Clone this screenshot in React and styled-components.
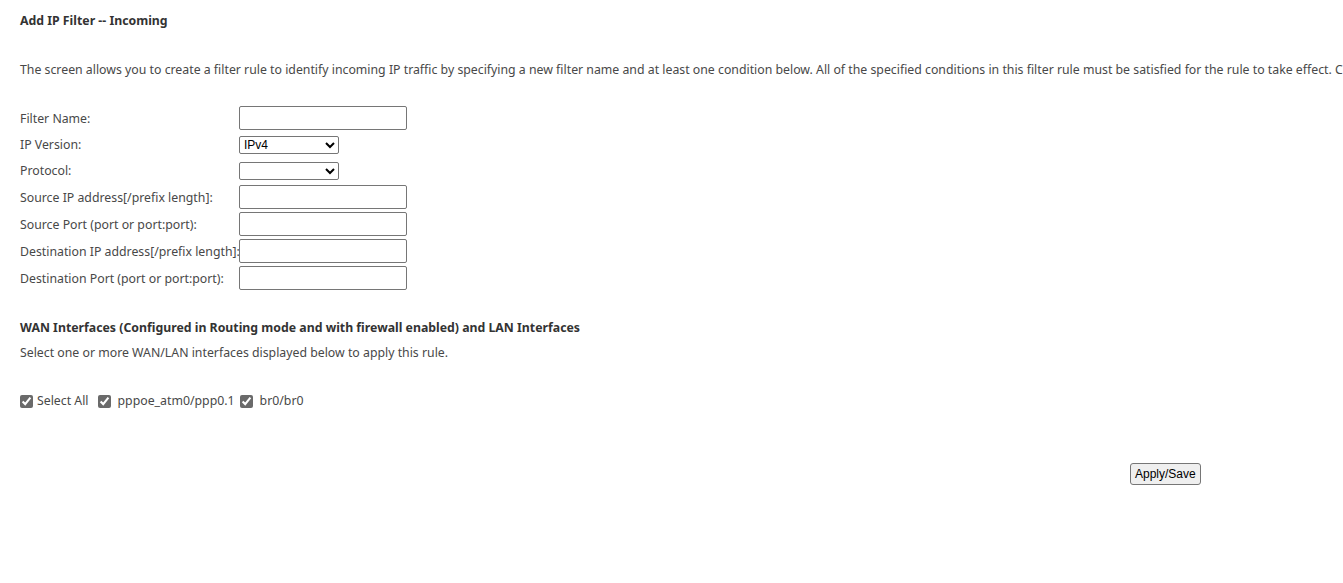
import React, { useState } from 'react'
import styled, { createGlobalStyle } from 'styled-components'

const GlobalStyle = createGlobalStyle`
    html, body {
        margin: 0;
        padding: 0;
        background: #fff;
        overflow: hidden;
    }
    body {
        font-family: "Noto Sans", "Open Sans", Arial, sans-serif;
        font-size: 12.3px;
        color: #484848;
    }
`

const Page = styled.div`
    padding: 11px 20px 0 20px;
    width: 1343px;
    height: 583px;
    box-sizing: border-box;
    overflow: hidden;
`

const Title = styled.div`
    font-weight: bold;
    line-height: 20px;
    color: #333;
`

const Description = styled.div`
    margin-top: 29px;
    line-height: 20px;
    white-space: nowrap;
`

const FormGrid = styled.div`
    margin-top: 26px;
    display: grid;
    grid-template-columns: 219px auto;
    row-gap: 3px;
    align-items: center;
`

const Label = styled.div`
    min-height: 23px;
    line-height: 23px;
    white-space: nowrap;
`

const Field = styled.div`
    display: flex;
    align-items: center;
`

const TextInput = styled.input`
    width: 168px;
    height: 24px;
    box-sizing: border-box;
    border: 1px solid #767676;
    border-radius: 2px;
    padding: 1px 2px;
    font-family: Arial, "Liberation Sans", sans-serif;
    font-size: 13px;
`

const Select = styled.select`
    width: 100px;
    height: 18px;
    box-sizing: border-box;
    border: 1px solid #767676;
    border-radius: 2px;
    padding: 0;
    font-family: Arial, "Liberation Sans", sans-serif;
    font-size: 12px;
    color: #000;
    background: #fff;
`

const SectionTitle = styled.div`
    margin-top: 28px;
    font-weight: bold;
    line-height: 20px;
    color: #333;
`

const SectionText = styled.div`
    margin-top: 5px;
    line-height: 20px;
`

const CheckRow = styled.div`
    margin-top: 28px;
    display: flex;
    align-items: center;
    line-height: 20px;
`

const CheckLabel = styled.label`
    display: flex;
    align-items: center;
    margin-right: ${p => p.gap || 4}px;
    cursor: pointer;
`

const Check = styled.input`
    width: 13px;
    height: 13px;
    margin: 0 ${p => p.space || 4}px 0 0;
    accent-color: #6a6a6a;
`

const ButtonRow = styled.div`
    margin-top: 52px;
    padding-left: 1110px;
`

const Button = styled.button`
    height: 22px;
    padding: 1px 4px;
    font-family: Arial, "Liberation Sans", sans-serif;
    font-size: 12px;
    color: #000;
    background: #efefef;
    border: 1px solid #767676;
    border-radius: 3px;
`

const fields = [
    { label: 'Filter Name:', type: 'text' },
    { label: 'IP Version:', type: 'select', options: ['IPv4', 'IPv6'] },
    { label: 'Protocol:', type: 'select', options: ['', 'TCP/UDP', 'TCP', 'UDP', 'ICMP'] },
    { label: 'Source IP address[/prefix length]:', type: 'text' },
    { label: 'Source Port (port or port:port):', type: 'text' },
    { label: 'Destination IP address[/prefix length]:', type: 'text' },
    { label: 'Destination Port (port or port:port):', type: 'text' },
]

const interfaces = ['pppoe_atm0/ppp0.1', 'br0/br0']

const App = () => {
    const [checked, setChecked] = useState(interfaces.map(() => true))
    const allChecked = checked.every(Boolean)

    return (
        <Page>
            <GlobalStyle />
            <Title>Add IP Filter -- Incoming</Title>
            <Description>
                The screen allows you to create a filter rule to identify incoming IP traffic by specifying a new filter name and at least one condition below. All of the specified conditions in this filter rule must be satisfied for the rule to take effect. Click 'Apply/Save' to save and activate the filter.
            </Description>
            <FormGrid>
                {fields.map(f => (
                    <React.Fragment key={f.label}>
                        <Label>{f.label}</Label>
                        <Field>
                            {f.type === 'text'
                                ? <TextInput type="text" />
                                : (
                                    <Select defaultValue={f.options[0]}>
                                        {f.options.map(o => <option key={o} value={o}>{o}</option>)}
                                    </Select>
                                )}
                        </Field>
                    </React.Fragment>
                ))}
            </FormGrid>
            <SectionTitle>WAN Interfaces (Configured in Routing mode and with firewall enabled) and LAN Interfaces</SectionTitle>
            <SectionText>Select one or more WAN/LAN interfaces displayed below to apply this rule.</SectionText>
            <CheckRow>
                <CheckLabel gap={9}>
                    <Check
                        type="checkbox"
                        space={4}
                        checked={allChecked}
                        onChange={() => setChecked(checked.map(() => !allChecked))}
                    />
                    Select All
                </CheckLabel>
                {interfaces.map((name, i) => (
                    <CheckLabel key={name} gap={5}>
                        <Check
                            type="checkbox"
                            space={7}
                            checked={checked[i]}
                            onChange={() => setChecked(checked.map((c, j) => (j === i ? !c : c)))}
                        />
                        {name}
                    </CheckLabel>
                ))}
            </CheckRow>
            <ButtonRow>
                <Button type="button">Apply/Save</Button>
            </ButtonRow>
        </Page>
    )
}

export default App
